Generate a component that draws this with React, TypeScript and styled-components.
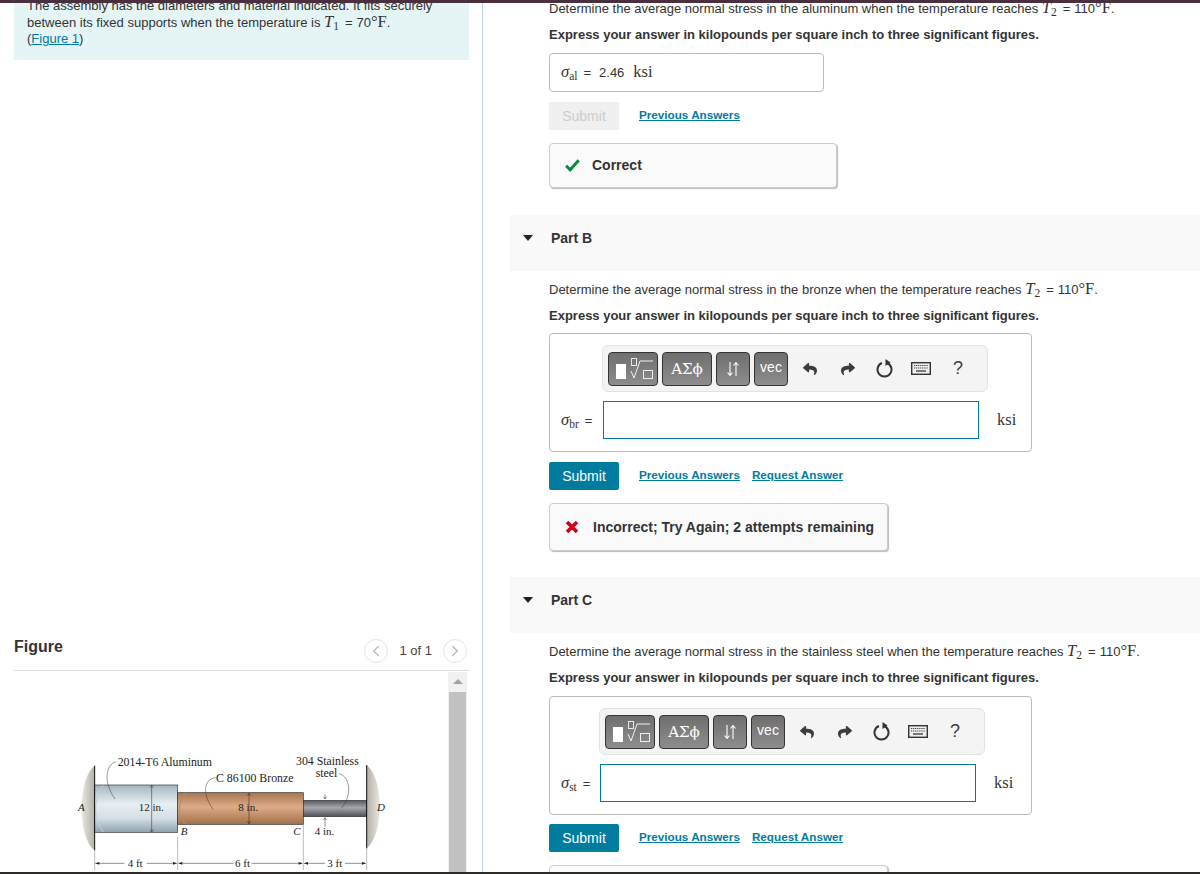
import React from 'react';
import styled, { createGlobalStyle } from 'styled-components';
import { FaReply, FaShare } from 'react-icons/fa';
import { ChevronLeft, ChevronRight } from 'lucide-react';

const GlobalStyle = createGlobalStyle`
  html, body { margin: 0; padding: 0; background: #fff; }
  body { font-family: 'Liberation Sans', Arial, sans-serif; color: #333; }
`;

const Page = styled.div`
  width: 1200px;
  height: 874px;
  display: flex;
  flex-direction: column;
  overflow: hidden;
`;

const TopBar = styled.div`
  height: 3px;
  flex: none;
  background: #4a2f3e;
`;

const BottomBar = styled.div`
  height: 2px;
  flex: none;
  background: #2e2a25;
`;

const Columns = styled.div`
  flex: 1;
  min-height: 0;
  display: flex;
`;

const LeftColumn = styled.div`
  width: 483px;
  flex: none;
  box-sizing: border-box;
  border-right: 1px solid #bcd0e2;
  padding: 0 13px 0 14px;
  display: flex;
  flex-direction: column;
  justify-content: space-between;
  overflow: hidden;
`;

const IntroBox = styled.div`
  margin-top: -5px;
  background: #e5f5f6;
  padding: 0 12px 13px 13px;
  font-size: 13px;
  line-height: 16px;
  color: #333;
`;

const TextLink = styled.a`
  color: #007c9e;
  text-decoration: underline;
`;

const FigureSection = styled.div`
  height: 245px;
  flex: none;
  display: flex;
  flex-direction: column;
`;

const FigureHeader = styled.div`
  height: 44px;
  flex: none;
  display: flex;
  align-items: center;
  justify-content: space-between;
  border-bottom: 1px solid #ddd;
  padding-bottom: 4px;
  box-sizing: border-box;
`;

const FigureTitle = styled.div`
  font-size: 16px;
  font-weight: 700;
  color: #333;
`;

const Pager = styled.div`
  display: flex;
  align-items: center;
  gap: 11px;
  margin: 8px 2px 0 0;
  font-size: 13px;
  color: #444;
`;

const PagerButton = styled.span`
  width: 24px;
  height: 24px;
  box-sizing: border-box;
  border: 1px solid #e4e4e4;
  border-radius: 50%;
  display: flex;
  align-items: center;
  justify-content: center;
  color: #bbb;
`;

const FigureBody = styled.div`
  flex: 1;
  min-height: 0;
  display: flex;
  justify-content: space-between;
  overflow: hidden;
`;

const FigureCanvas = styled.div`
  padding: 74px 0 0 56px;
`;

const Scrollbar = styled.div`
  width: 19px;
  flex: none;
  margin: 1px 2px 0 0;
  background: #f1f1f1;
  display: flex;
  flex-direction: column;
  align-items: center;
`;

const ScrollArrow = styled.div`
  margin: 7px 0 8px;
  width: 0;
  height: 0;
  border-left: 5px solid transparent;
  border-right: 5px solid transparent;
  border-bottom: 5px solid #a3a3a3;
`;

const ScrollThumb = styled.div`
  width: 17px;
  flex: 1;
  background: #c1c1c1;
`;

const RightColumn = styled.div`
  flex: 1;
  min-width: 0;
  padding-left: 26px;
  overflow: hidden;
`;

const Content = styled.div`
  padding: 8px 0 0 40px;
`;

const FirstContent = styled(Content)`
  margin-top: -5px;
  padding-top: 0;
`;

const Prompt = styled.div`
  font-size: 13px;
  line-height: 20px;
  color: #333;
  white-space: nowrap;
`;

const Instruction = styled.div`
  font-size: 13px;
  line-height: 20px;
  font-weight: 700;
  margin-top: 6px;
  color: #333;
`;

const MathVar = styled.span`
  font-family: 'Liberation Serif', serif;
  font-style: italic;
  font-size: 16.5px;
`;

const MathSub = styled.sub`
  font-family: 'Liberation Serif', serif;
  font-size: 11.5px;
  line-height: 0;
  vertical-align: -3px;
`;

const MathUnit = styled.span`
  font-family: 'Liberation Serif', serif;
  font-size: 16.5px;
`;

const MathText = styled.span`
  font-size: 13px;
  margin: 0 4px 0 6px;
`;

const AnsweredBox = styled.div`
  width: 275px;
  height: 39px;
  box-sizing: border-box;
  margin-top: 8px;
  padding: 0 0 1px 11px;
  border: 1px solid #bbb;
  border-radius: 4px;
  display: flex;
  align-items: center;
  gap: 8px;
`;

const AnswerValue = styled.span`
  font-size: 13px;
  margin: 0 1px 0 -4px;
`;

const ActionRow = styled.div<{ $top?: number }>`
  margin-top: ${(p) => p.$top ?? 10}px;
  display: flex;
  align-items: flex-start;
  gap: 12px;
`;

const SubmitButton = styled.button<{ $disabled?: boolean }>`
  width: 70px;
  height: 28px;
  margin-right: 8px;
  padding: 0;
  border: none;
  border-radius: 2px;
  font-family: inherit;
  font-size: 14px;
  background: ${(p) => (p.$disabled ? '#f0f0f0' : '#007c9e')};
  color: ${(p) => (p.$disabled ? '#ccc' : '#fff')};
`;

const ActionLink = styled(TextLink)`
  font-size: 11.7px;
  font-weight: 700;
  line-height: 26px;
`;

const Feedback = styled.div<{ $width: number; $height: number; $pad: number }>`
  width: ${(p) => p.$width}px;
  height: ${(p) => p.$height}px;
  box-sizing: border-box;
  margin-top: 13px;
  padding: 0 0 1px 15px;
  background: #fafafa;
  border: 1px solid #ccc;
  border-radius: 4px;
  box-shadow: 1px 1px 1px #bbb;
  display: flex;
  align-items: center;
  gap: ${(p) => p.$pad}px;
  font-size: 14px;
  font-weight: 700;
  color: #333;
`;

const PartHeader = styled.div<{ $top: number }>`
  height: 56px;
  margin-top: ${(p) => p.$top}px;
  background: #f9f9f9;
  display: flex;
  align-items: center;
  gap: 18px;
  padding: 0 0 11px 14px;
  box-sizing: border-box;
  font-size: 14px;
  font-weight: 700;
  color: #333;
`;

const Caret = styled.span`
  width: 0;
  height: 0;
  border-left: 5.5px solid transparent;
  border-right: 5.5px solid transparent;
  border-top: 6px solid #222;
`;

const EditorBox = styled.div<{ $top: number; $label: number }>`
  width: 483px;
  height: 119px;
  box-sizing: border-box;
  margin-top: ${(p) => p.$top}px;
  padding: 11px 0 0 11px;
  border: 1px solid #bbb;
  border-radius: 4px;
  display: grid;
  grid-template-columns: ${(p) => p.$label}px 376px auto;
  grid-template-rows: 47px 38px;
  column-gap: 9px;
  row-gap: 9px;
  align-items: center;
  justify-content: start;
`;

const Toolbar = styled.div`
  grid-column: 2 / 4;
  grid-row: 1;
  width: 386px;
  height: 47px;
  margin-left: -1px;
  box-sizing: border-box;
  padding-left: 5px;
  background: #f4f4f4;
  border: 1px solid #e2e2e2;
  border-radius: 6px;
  display: flex;
  align-items: center;
`;

const ToolButton = styled.span<{ $width: number }>`
  width: ${(p) => p.$width}px;
  height: 34px;
  margin-right: 4px;
  box-sizing: border-box;
  border: 1px solid #333;
  border-radius: 4px;
  background: linear-gradient(#6f6f6f, #8d8d8d);
  color: #fff;
  display: flex;
  align-items: center;
  justify-content: center;
  font-size: 14px;
`;

const GreekLabel = styled.span`
  font-family: 'DejaVu Serif', serif;
  font-size: 15px;
`;

const VecLabel = styled.span`
  margin-top: -3px;
`;

const ToolIcon = styled.span<{ $left: number; $width: number }>`
  width: ${(p) => p.$width}px;
  margin-left: ${(p) => p.$left}px;
  display: flex;
  justify-content: center;
  align-items: center;
  color: #3c3c3c;
  font-size: 18px;
`;

const EditorLabel = styled.div`
  grid-column: 1;
  grid-row: 2;
  white-space: nowrap;
`;

const EditorInput = styled.div`
  grid-column: 2;
  grid-row: 2;
  height: 38px;
  box-sizing: border-box;
  border: 1px solid #007c9e;
  background: #fff;
`;

const EditorUnit = styled.div`
  grid-column: 3;
  grid-row: 2;
  margin-left: 9px;
`;

const RootIcon = () => (
  <svg width="48" height="32" viewBox="0 0 48 32" fill="none">
    <rect x="7" y="11" width="10" height="15" fill="#fff" />
    <rect x="22.5" y="5.5" width="5" height="7" stroke="#e8e8e8" />
    <path d="M22 18l3 7 6-17h13" stroke="#f0f0f0" />
    <rect x="34.5" y="17.5" width="9" height="8" stroke="#f0f0f0" />
  </svg>
);

const ArrowsIcon = () => (
  <svg width="14" height="16" viewBox="0 0 14 16" fill="none" stroke="#fff" strokeWidth="1.1">
    <path d="M4 1v13M1.5 11.5L4 14.5l2.5-3M10 15V2M7.5 4.5L10 1.5l2.5 3" />
  </svg>
);

const ResetIcon = () => (
  <svg width="18" height="19" viewBox="0 0 18 19" fill="none">
    <path d="M11 4a7 7 0 1 1-5 0" stroke="#333" strokeWidth="2" />
    <path d="M9.5 0l5 3.5-5 3.5z" fill="#333" />
  </svg>
);

const KeyboardIcon = () => (
  <svg width="20" height="13" viewBox="0 0 20 13" fill="none">
    <rect x="0.7" y="0.7" width="18.6" height="11.6" fill="#efefef" stroke="#333" strokeWidth="1.4" />
    <path d="M3 3.5h14M3 6h14" stroke="#444" strokeDasharray="1.2 0.7" />
    <path d="M5 9h10" stroke="#444" strokeWidth="1.4" />
  </svg>
);

const CheckMark = () => (
  <svg width="15" height="13" viewBox="0 0 15 13" fill="none">
    <path d="M1.2 6.8l4 4 8.5-9.5" stroke="#0a8a3c" strokeWidth="3" />
  </svg>
);

const CrossMark = () => (
  <svg width="14" height="14" viewBox="0 0 14 14" fill="none">
    <path d="M2 2l10 10M12 2L2 12" stroke="#d0021b" strokeWidth="3.6" />
  </svg>
);

const AssemblyDiagram = () => (
  <svg width="330" height="129" viewBox="0 0 990 387">
    <defs>
      <linearGradient id="wall" x1="0" x2="1" y1="0" y2="0">
        <stop offset="0" stopColor="#e8e6de" />
        <stop offset="1" stopColor="#b3b1a6" />
      </linearGradient>
      <linearGradient id="wallD" x1="0" x2="1" y1="0" y2="0">
        <stop offset="0" stopColor="#b3b1a6" />
        <stop offset="1" stopColor="#e8e6de" />
      </linearGradient>
      <linearGradient id="alum" x1="0" x2="0" y1="0" y2="1">
        <stop offset="0" stopColor="#a4b6c2" />
        <stop offset="0.4" stopColor="#e6eef2" />
        <stop offset="0.7" stopColor="#d5e0e6" />
        <stop offset="1" stopColor="#8ea2ae" />
      </linearGradient>
      <linearGradient id="bronze" x1="0" x2="0" y1="0" y2="1">
        <stop offset="0" stopColor="#a87750" />
        <stop offset="0.45" stopColor="#dcab87" />
        <stop offset="1" stopColor="#a26f49" />
      </linearGradient>
      <linearGradient id="steel" x1="0" x2="0" y1="0" y2="1">
        <stop offset="0" stopColor="#55585c" />
        <stop offset="0.45" stopColor="#a3a6aa" />
        <stop offset="1" stopColor="#4d5054" />
      </linearGradient>
    </defs>
    <path d="M74 62C22 100 22 280 74 316Z" fill="url(#wall)" />
    <path d="M890 60C942 100 942 270 890 310Z" fill="url(#wallD)" />
    <rect x="74" y="120" width="249" height="142" fill="url(#alum)" stroke="#333" strokeWidth="2" />
    <path d="M100 121c-30 40-30 100 0 140" stroke="#c5d0d6" strokeWidth="3" fill="none" />
    <rect x="323" y="143" width="377" height="95" fill="url(#bronze)" stroke="#333" strokeWidth="2" />
    <path d="M345 144c-22 30-22 64 0 93" stroke="#b98a64" strokeWidth="3" fill="none" />
    <rect x="700" y="166" width="190" height="49" fill="url(#steel)" stroke="#333" strokeWidth="2" />
    <path d="M74 62v254M890 60v250" stroke="#111" strokeWidth="3" />
    <path d="M323 275v100M700 238v137M890 310v65M74 316v60" stroke="#777" strokeWidth="1.5" />
    <path d="M245 122v138M240 128l5-7 5 7M240 254l5 7 5-7" stroke="#222" strokeWidth="1.5" fill="none" />
    <path d="M537 145v91M532 152l5-7 5 7M532 229l5 7 5-7" stroke="#222" strokeWidth="1.5" fill="none" />
    <path d="M765 148v14M760 155l5 7 5-7M765 245v-27M760 225l5-7 5 7" stroke="#222" strokeWidth="1.5" fill="none" />
    <path d="M138 50c-30 8-40 60 -3 112M437 98c-38 5-40 50-8 95M808 86c32 10 40 65 6 104" stroke="#333" strokeWidth="1.5" fill="none" />
    <path d="M76 355h87M230 355h90M326 355h165M545 355h152M703 355h62M825 355h62" stroke="#222" strokeWidth="1.5" />
    <path d="M76 355l12-4v8zM321 355l-12-4v8zM325 355l12-4v8zM698 355l-12-4v8zM702 355l12-4v8zM888 355l-12-4v8z" fill="#222" />
    <g fontFamily="'Liberation Serif', serif" fontSize="35.5" fill="#222">
      <text x="143" y="62">2014-T6 Aluminum</text>
      <text x="438" y="112">C 86100 Bronze</text>
      <text x="678" y="61">304 Stainless</text>
      <text x="737" y="97">steel</text>
    </g>
    <g fontFamily="'Liberation Serif', serif" fontSize="33" fill="#222">
      <text x="206" y="198">12 in.</text>
      <text x="505" y="199">8 in.</text>
      <text x="734" y="271">4 in.</text>
      <text x="173" y="367">4 ft</text>
      <text x="495" y="367">6 ft</text>
      <text x="772" y="367">3 ft</text>
      <g fontStyle="italic">
        <text x="24" y="198">A</text>
        <text x="332" y="269">B</text>
        <text x="670" y="269">C</text>
        <text x="921" y="198">D</text>
      </g>
    </g>
  </svg>
);

type Temp = { sym: string; value: string };

const TempValue = ({ sym, value }: Temp) => (
  <>
    <MathVar>T</MathVar>
    <MathSub>{sym}</MathSub>
    <MathText>=</MathText>
    {value}
    <MathUnit>°F</MathUnit>.
  </>
);

const ToolbarRow = () => (
  <Toolbar>
    <ToolButton $width={50}><RootIcon /></ToolButton>
    <ToolButton $width={50}><GreekLabel>ΑΣϕ</GreekLabel></ToolButton>
    <ToolButton $width={34}><ArrowsIcon /></ToolButton>
    <ToolButton $width={34}><VecLabel>vec</VecLabel></ToolButton>
    <ToolIcon $left={5} $width={26}><FaReply size={14} /></ToolIcon>
    <ToolIcon $left={12} $width={26}><FaShare size={14} /></ToolIcon>
    <ToolIcon $left={11} $width={26}><ResetIcon /></ToolIcon>
    <ToolIcon $left={10} $width={26}><KeyboardIcon /></ToolIcon>
    <ToolIcon $left={11} $width={26}>?</ToolIcon>
  </Toolbar>
);

const Editor = ({ sub, top, label }: { sub: string; top: number; label: number }) => (
  <EditorBox $top={top} $label={label}>
    <ToolbarRow />
    <EditorLabel>
      <MathVar>σ</MathVar>
      <MathSub>{sub}</MathSub>
      <MathText>=</MathText>
    </EditorLabel>
    <EditorInput />
    <EditorUnit><MathUnit>ksi</MathUnit></EditorUnit>
  </EditorBox>
);

const App = () => (
  <Page>
    <GlobalStyle />
    <TopBar />
    <Columns>
      <LeftColumn>
        <IntroBox>
          The assembly has the diameters and material indicated. It fits securely
          <br />
          between its fixed supports when the temperature is <TempValue sym="1" value="70" />
          <br />
          (<TextLink href="#">Figure 1</TextLink>)
        </IntroBox>
        <FigureSection>
          <FigureHeader>
            <FigureTitle>Figure</FigureTitle>
            <Pager>
              <PagerButton><ChevronLeft size={18} /></PagerButton>
              1 of 1
              <PagerButton><ChevronRight size={18} /></PagerButton>
            </Pager>
          </FigureHeader>
          <FigureBody>
            <FigureCanvas><AssemblyDiagram /></FigureCanvas>
            <Scrollbar>
              <ScrollArrow />
              <ScrollThumb />
            </Scrollbar>
          </FigureBody>
        </FigureSection>
      </LeftColumn>
      <RightColumn>
        <FirstContent>
          <Prompt>
            Determine the average normal stress in the aluminum when the temperature reaches <TempValue sym="2" value="110" />
          </Prompt>
          <Instruction>Express your answer in kilopounds per square inch to three significant figures.</Instruction>
          <AnsweredBox>
            <span>
              <MathVar>σ</MathVar>
              <MathSub>al</MathSub>
              <MathText>=</MathText>
            </span>
            <AnswerValue>2.46</AnswerValue>
            <MathUnit>ksi</MathUnit>
          </AnsweredBox>
          <ActionRow>
            <SubmitButton $disabled>Submit</SubmitButton>
            <ActionLink href="#">Previous Answers</ActionLink>
          </ActionRow>
          <Feedback $width={288} $height={45} $pad={12}>
            <CheckMark />
            Correct
          </Feedback>
        </FirstContent>
        <PartHeader $top={27}><Caret />Part B</PartHeader>
        <Content>
          <Prompt>
            Determine the average normal stress in the bronze when the temperature reaches <TempValue sym="2" value="110" />
          </Prompt>
          <Instruction>Express your answer in kilopounds per square inch to three significant figures.</Instruction>
          <Editor sub="br" top={7} label={33} />
          <ActionRow>
            <SubmitButton>Submit</SubmitButton>
            <ActionLink href="#">Previous Answers</ActionLink>
            <ActionLink href="#">Request Answer</ActionLink>
          </ActionRow>
          <Feedback $width={339} $height={48} $pad={14}>
            <CrossMark />
            Incorrect; Try Again; 2 attempts remaining
          </Feedback>
        </Content>
        <PartHeader $top={26}><Caret />Part C</PartHeader>
        <Content>
          <Prompt>
            Determine the average normal stress in the stainless steel when the temperature reaches <TempValue sym="2" value="110" />
          </Prompt>
          <Instruction>Express your answer in kilopounds per square inch to three significant figures.</Instruction>
          <Editor sub="st" top={8} label={30} />
          <ActionRow $top={9}>
            <SubmitButton>Submit</SubmitButton>
            <ActionLink href="#">Previous Answers</ActionLink>
            <ActionLink href="#">Request Answer</ActionLink>
          </ActionRow>
          <Feedback $width={339} $height={48} $pad={14} />
        </Content>
      </RightColumn>
    </Columns>
    <BottomBar />
  </Page>
);

export default App;
